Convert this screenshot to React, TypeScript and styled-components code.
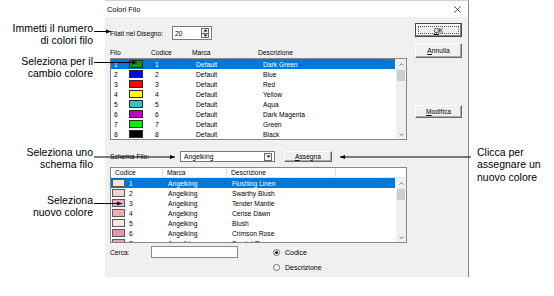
import React from "react";
import styled, { createGlobalStyle } from "styled-components";

const Global = createGlobalStyle`
  html, body { margin: 0; padding: 0; background: #fff; }
  body { font-family: "Liberation Sans", Arial, sans-serif; color: #000; }
  * { box-sizing: border-box; }
`;

const Figure = styled.div`
  position: relative;
  width: 554px;
  height: 296px;
  overflow: hidden;
  background: #fff;
`;

const Dialog = styled.div`
  margin-left: 105px;
  width: 364px;
  height: 277px;
  background: #f0f0f0;
  border-top: 1px solid #d2d2d2;
  border-right: 1px solid #858585;
  display: flex;
  flex-direction: column;
  font-size: 6.7px;
`;

const TitleBar = styled.div`
  height: 16px;
  background: #fff;
  display: flex;
  align-items: center;
  justify-content: space-between;
  padding: 0 7px 0 2px;
  font-size: 7.4px;
`;

const Body = styled.div`
  flex: 1;
  display: grid;
  grid-template-columns: 297px 47px;
  column-gap: 8px;
  padding-left: 5px;
`;

const Main = styled.div`
  display: flex;
  flex-direction: column;
`;

const Side = styled.div`
  display: flex;
  flex-direction: column;
`;

const SpinRow = styled.div`
  margin-top: 9px;
  height: 14px;
  display: flex;
  align-items: center;
`;

const FieldLabel = styled.span<{ $w: number }>`
  width: ${(p) => p.$w}px;
  flex: none;
  white-space: nowrap;
`;

const SpinBox = styled.div`
  width: 40px;
  height: 14px;
  border: 1px solid #7a7a7a;
  background: #fff;
  display: flex;
  align-items: center;
  justify-content: space-between;
  padding-left: 2px;
  padding-right: 2px;
`;

const SpinButtons = styled.div`
  width: 8px;
  height: 10px;
  border: 1px solid #6a6a6a;
  display: flex;
  flex-direction: column;
  background: #f4f4f4;
`;

const SpinHalf = styled.div<{ $down?: boolean }>`
  flex: 1;
  display: flex;
  align-items: center;
  justify-content: center;
  border-top: ${(p) => (p.$down ? "1px solid #6a6a6a" : "none")};
`;

const HeaderLabels = styled.div`
  margin-top: 7px;
  height: 11px;
  display: grid;
  grid-template-columns: 41px 41px 66px 1fr;
  align-items: center;
`;

const ListBox = styled.div<{ $h: number; $mt?: number }>`
  height: ${(p) => p.$h}px;
  margin-top: ${(p) => p.$mt ?? 0}px;
  border: 1px solid #828790;
  background: #fff;
  display: flex;
  flex-direction: column;
  overflow: hidden;
`;

const ListBodyRow = styled.div`
  flex: 1;
  display: flex;
  min-height: 0;
`;

const Rows = styled.div`
  flex: 1;
  overflow: hidden;
  padding-right: 1px;
`;

const ThreadRow = styled.div<{ $sel?: boolean }>`
  height: 10px;
  display: grid;
  grid-template-columns: 15px 26px 41px 67px 1fr;
  padding-left: 3px;
  align-items: center;
  background: ${(p) => (p.$sel ? "#0078d7" : "transparent")};
  color: ${(p) => (p.$sel ? "#fff" : "#000")};
  white-space: nowrap;
`;

const SchemeRow = styled.div<{ $sel?: boolean }>`
  height: 10px;
  display: grid;
  grid-template-columns: 17px 39px 64px 1fr;
  padding-left: 1px;
  align-items: center;
  background: ${(p) => (p.$sel ? "#0078d7" : "transparent")};
  color: ${(p) => (p.$sel ? "#fff" : "#000")};
  white-space: nowrap;
`;

const Swatch = styled.span<{ $c: string; $w: number; $b: string }>`
  display: block;
  width: ${(p) => p.$w}px;
  height: 8px;
  background: ${(p) => p.$c};
  border: 1px solid ${(p) => p.$b};
`;

const ScrollBar = styled.div`
  width: 10px;
  flex: none;
  background: #f0f0f0;
  display: flex;
  flex-direction: column;
`;

const ScrollArrow = styled.div`
  height: 10px;
  display: flex;
  align-items: center;
  justify-content: center;
  flex: none;
`;

const Thumb = styled.div`
  height: 11px;
  margin: 1px 1px 0;
  background: #cdcdcd;
  flex: none;
`;

const Track = styled.div`
  flex: 1;
`;

const ColumnHeader = styled.div`
  height: 10px;
  display: grid;
  grid-template-columns: 52px 64px 109px 1fr;
  flex: none;
`;

const HeaderCell = styled.div`
  border-right: 1px solid #e3e3e3;
  border-bottom: 1px solid #e3e3e3;
  padding-left: 4px;
  display: flex;
  align-items: center;
  white-space: nowrap;
  &:last-child { border-right: none; }
`;

const SchemaBar = styled.div`
  margin-top: 11px;
  height: 11px;
  display: flex;
  align-items: center;
`;

const Combo = styled.div`
  width: 95px;
  height: 11px;
  border: 1px solid #7a7a7a;
  background: #fff;
  display: flex;
  align-items: center;
  justify-content: space-between;
  padding-left: 3px;
  padding-right: 2px;
`;

const ComboButton = styled.div`
  width: 8px;
  height: 8px;
  border: 1px solid #6a6a6a;
  background: #f4f4f4;
  display: flex;
  align-items: center;
  justify-content: center;
`;

const Button = styled.div<{ $w?: number; $h: number; $mt: number; $ml?: number; $def?: boolean }>`
  position: relative;
  width: ${(p) => p.$w ?? 47}px;
  height: ${(p) => p.$h}px;
  margin-top: ${(p) => p.$mt}px;
  margin-left: ${(p) => p.$ml ?? 0}px;
  flex: none;
  display: flex;
  align-items: center;
  justify-content: center;
  background: #f0f0f0;
  border: 1px solid;
  border-color: ${(p) => (p.$def ? "#444" : "#fff #6a6a6a #6a6a6a #fff")};
  box-shadow: ${(p) => (p.$def ? "inset -1px -1px #8a8a8a, inset 1px 1px #fff" : "inset -1px -1px #a8a8a8")};
  font-size: 6.7px;
  & > span { position: relative; z-index: 1; }
  &::after {
    content: "";
    display: ${(p) => (p.$def ? "block" : "none")};
    position: absolute;
    inset: 2px;
    border: 1px dotted #555;
  }
`;

const BottomBar = styled.div`
  margin-top: 3px;
  display: flex;
  align-items: flex-start;
`;

const SearchRow = styled.div`
  height: 12px;
  display: flex;
  align-items: center;
`;

const SearchInput = styled.div`
  width: 87px;
  height: 12px;
  border: 1px solid #8a8a8a;
  background: #fff;
`;

const RadioGroup = styled.div`
  margin-left: 35px;
  display: flex;
  flex-direction: column;
  gap: 3px;
`;

const RadioLine = styled.div`
  height: 12px;
  display: flex;
  align-items: center;
  gap: 5px;
  font-size: 7px;
`;

const RadioDot = styled.span<{ $on?: boolean }>`
  width: 7px;
  height: 7px;
  border-radius: 50%;
  border: 1px solid #6a6a6a;
  background: #fff;
  display: flex;
  align-items: center;
  justify-content: center;
  &::after {
    content: "";
    width: 3px;
    height: 3px;
    border-radius: 50%;
    background: ${(p) => (p.$on ? "#111" : "transparent")};
  }
`;

const Callout = styled.div<{ $top: number; $left?: number; $right?: number; $align: string }>`
  position: absolute;
  top: ${(p) => p.$top}px;
  ${(p) => (p.$left !== undefined ? `left: ${p.$left}px;` : "")}
  ${(p) => (p.$right !== undefined ? `right: ${p.$right}px;` : "")}
  text-align: ${(p) => p.$align};
  font-size: 10.5px;
  line-height: 12.4px;
  color: #000;
  white-space: nowrap;
`;

const Leaders = styled.svg`
  position: absolute;
  left: 0;
  top: 0;
  pointer-events: none;
`;

const Chevron = ({ down }: { down?: boolean }) => (
  <svg width="5" height="3" viewBox="0 0 5 3">
    <path d={down ? "M0.5 0.5 L2.5 2.5 L4.5 0.5" : "M0.5 2.5 L2.5 0.5 L4.5 2.5"} fill="none" stroke="#606060" strokeWidth="0.8" />
  </svg>
);

const Tri = ({ down }: { down?: boolean }) => (
  <svg width="5" height="3" viewBox="0 0 5 3">
    <path d={down ? "M0.5 0.5 L4.5 0.5 L2.5 2.7 Z" : "M0.5 2.5 L4.5 2.5 L2.5 0.3 Z"} fill="#111" />
  </svg>
);

const threads = [
  { n: 1, c: "#129612", d: "Dark Green" },
  { n: 2, c: "#0000ff", d: "Blue" },
  { n: 3, c: "#ff0000", d: "Red" },
  { n: 4, c: "#ffff00", d: "Yellow" },
  { n: 5, c: "#33c4c4", d: "Aqua" },
  { n: 6, c: "#c000c0", d: "Dark Magenta" },
  { n: 7, c: "#00f000", d: "Green" },
  { n: 8, c: "#000000", d: "Black" },
];

const scheme = [
  { n: 1, c: "#fbe3de", d: "Flushing Linen" },
  { n: 2, c: "#f0d4d2", d: "Swarthy Blush" },
  { n: 3, c: "#eeaac4", d: "Tender Mantle" },
  { n: 4, c: "#ffa9a9", d: "Cerise Dawn" },
  { n: 5, c: "#fde5e1", d: "Blush" },
  { n: 6, c: "#e894b9", d: "Crimson Rose" },
  { n: 7, c: "#e8a0b0", d: "Scarlet Rose" },
];

type Arrow = { x1: number; x2: number; y: number };
const arrows: Arrow[] = [
  { x1: 94, x2: 111, y: 31.5 },
  { x1: 94, x2: 137, y: 62.5 },
  { x1: 94, x2: 175, y: 157 },
  { x1: 94, x2: 122, y: 203.5 },
  { x1: 471, x2: 340, y: 157 },
];

const arrowHead = (a: Arrow) => {
  const dir = a.x2 > a.x1 ? 1 : -1;
  const b = a.x2 - dir * 5;
  return `M${a.x2} ${a.y} L${b} ${a.y - 2} L${b} ${a.y + 2} Z`;
};

export default function App() {
  return (
    <>
      <Global />
      <Figure>
        <Dialog>
          <TitleBar>
            <span>Colori Filo</span>
            <svg width="7" height="7" viewBox="0 0 7 7">
              <path d="M0.5 0.5 L6.5 6.5 M6.5 0.5 L0.5 6.5" stroke="#222" strokeWidth="0.8" />
            </svg>
          </TitleBar>
          <Body>
            <Main>
              <SpinRow>
                <FieldLabel $w={62}>Filati nel Disegno:</FieldLabel>
                <SpinBox>
                  <span>20</span>
                  <SpinButtons>
                    <SpinHalf><Tri /></SpinHalf>
                    <SpinHalf $down><Tri down /></SpinHalf>
                  </SpinButtons>
                </SpinBox>
              </SpinRow>
              <HeaderLabels>
                <span>Filo</span>
                <span>Codice</span>
                <span>Marca</span>
                <span>Descrizione</span>
              </HeaderLabels>
              <ListBox $h={82}>
                <ListBodyRow>
                  <Rows>
                    {threads.map((t) => (
                      <ThreadRow key={t.n} $sel={t.n === 1}>
                        <span>{t.n}</span>
                        <Swatch $c={t.c} $w={14} $b="#2a2a2a" />
                        <span>{t.n}</span>
                        <span>Default</span>
                        <span>{t.d}</span>
                      </ThreadRow>
                    ))}
                  </Rows>
                  <ScrollBar>
                    <ScrollArrow><Chevron /></ScrollArrow>
                    <Thumb />
                    <Track />
                    <ScrollArrow><Chevron down /></ScrollArrow>
                  </ScrollBar>
                </ListBodyRow>
              </ListBox>
              <SchemaBar>
                <FieldLabel $w={70}>Schema Filo:</FieldLabel>
                <Combo>
                  <span>Angelking</span>
                  <ComboButton><Tri down /></ComboButton>
                </Combo>
                <Button $w={48} $h={11} $mt={0} $ml={9}>
                  <span><u>A</u>ssegna</span>
                </Button>
              </SchemaBar>
              <ListBox $h={76} $mt={5}>
                <ColumnHeader>
                  <HeaderCell>Codice</HeaderCell>
                  <HeaderCell>Marca</HeaderCell>
                  <HeaderCell>Descrizione</HeaderCell>
                  <HeaderCell />
                </ColumnHeader>
                <ListBodyRow>
                  <Rows>
                    {scheme.map((s) => (
                      <SchemeRow key={s.n} $sel={s.n === 1}>
                        <Swatch $c={s.c} $w={13} $b="#5a5a5a" />
                        <span>{s.n}</span>
                        <span>Angelking</span>
                        <span>{s.d}</span>
                      </SchemeRow>
                    ))}
                  </Rows>
                  <ScrollBar>
                    <ScrollArrow><Chevron /></ScrollArrow>
                    <Thumb />
                    <Track />
                    <ScrollArrow><Chevron down /></ScrollArrow>
                  </ScrollBar>
                </ListBodyRow>
              </ListBox>
              <BottomBar>
                <SearchRow>
                  <FieldLabel $w={41}>Cerca:</FieldLabel>
                  <SearchInput />
                </SearchRow>
                <RadioGroup>
                  <RadioLine><RadioDot $on /><span>Codice</span></RadioLine>
                  <RadioLine><RadioDot /><span>Descrizione</span></RadioLine>
                </RadioGroup>
              </BottomBar>
            </Main>
            <Side>
              <Button $h={14} $mt={6} $def><span><u>O</u>K</span></Button>
              <Button $h={15} $mt={6}><span><u>A</u>nnulla</span></Button>
              <Button $h={13} $mt={47}><span><u>M</u>odifica</span></Button>
            </Side>
          </Body>
        </Dialog>

        <Callout $top={22} $right={461} $align="right">Immetti il numero<br />di colori filo</Callout>
        <Callout $top={54.6} $right={461} $align="right">Seleziona per il<br />cambio colore</Callout>
        <Callout $top={146} $right={461} $align="right">Seleziona uno<br />schema filo</Callout>
        <Callout $top={194} $right={461} $align="right">Seleziona<br />nuovo colore</Callout>
        <Callout $top={146} $left={477} $align="left">Clicca per<br />assegnare un<br />nuovo colore</Callout>

        <Leaders width="554" height="296" viewBox="0 0 554 296">
          {arrows.map((a, i) => (
            <g key={i}>
              <line x1={a.x1} y1={a.y} x2={a.x2} y2={a.y} stroke="#000" strokeWidth="1" />
              <path d={arrowHead(a)} fill="#000" />
            </g>
          ))}
        </Leaders>
      </Figure>
    </>
  );
}
